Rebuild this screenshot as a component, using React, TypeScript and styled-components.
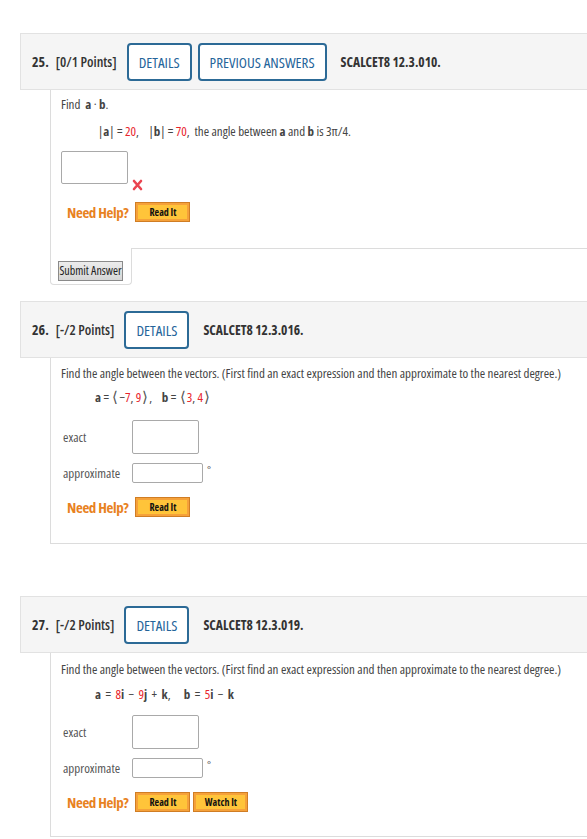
import React from "react";
import styled, { createGlobalStyle } from "styled-components";

const Global = createGlobalStyle`
  html, body { margin: 0; padding: 0; background: #ffffff; }
  body {
    font-family: "Open Sans", "Liberation Sans", sans-serif;
    font-stretch: 75%;
    font-weight: 400;
    color: #444;
  }
  button { font-family: inherit; font-stretch: inherit; }
`;

const Page = styled.div`
  padding: 33px 0 0 20px;
  display: flex;
  flex-direction: column;
`;

const Question = styled.section<{ $gap: number }>`
  margin-top: ${(p) => p.$gap}px;
  display: flex;
  flex-direction: column;
`;

const Header = styled.div`
  height: 55px;
  display: flex;
  align-items: center;
  background: #f5f5f5;
  border: 1px solid #e2e2e2;
  border-right: none;
  padding-left: 11px;
  color: #333;
  white-space: nowrap;
`;

const QNum = styled.span`
  font-size: 14px;
  font-weight: bold;
  margin-right: 7px;
`;

const Points = styled.span`
  font-size: 14px;
  font-weight: 600;
  margin-right: 10px;
`;

const OutlineButton = styled.button`
  height: 38px;
  padding: 0 10px;
  margin-right: 6px;
  border: 2px solid #2c6a96;
  border-radius: 4px;
  background: #fff;
  color: #24649a;
  font-size: 15px;
  font-weight: 400;
  white-space: nowrap;
`;

const Code = styled.span`
  margin-left: 8px;
  font-size: 13.5px;
  font-weight: bold;
`;

const Body = styled.div<{ $closed?: boolean }>`
  margin-left: 30px;
  border-left: 1px solid #dcdcdc;
  border-bottom: ${(p) => (p.$closed ? "1px solid #dcdcdc" : "none")};
  padding: 7px 0 0 10px;
  display: flex;
  flex-direction: column;
  font-size: 13px;
`;

const Line = styled.div<{ $indent?: number; $mt?: number; $spread?: number }>`
  line-height: 15px;
  margin-left: ${(p) => p.$indent ?? 0}px;
  margin-top: ${(p) => p.$mt ?? 0}px;
  word-spacing: ${(p) => p.$spread ?? 0}px;
  white-space: nowrap;
`;

const Red = styled.span`
  color: #e8242c;
`;

const Bracket = styled.span`
  font-family: "DejaVu Sans", sans-serif;
  font-size: 15px;
  font-weight: 300;
  color: #555;
  margin: 0 1px;
`;

const AnswerRow = styled.div<{ $mt: number }>`
  display: flex;
  align-items: flex-end;
  margin-top: ${(p) => p.$mt}px;
`;

const TextBox = styled.div<{ $w: number; $h: number }>`
  width: ${(p) => p.$w}px;
  height: ${(p) => p.$h}px;
  box-sizing: border-box;
  border: 1px solid #a9a9a9;
  border-radius: 2px;
  background: #fff;
`;

const WrongMark = styled.svg`
  width: 11px;
  height: 12px;
  margin: 0 0 -7px 4px;
`;

const HelpRow = styled.div<{ $mt: number }>`
  display: flex;
  align-items: center;
  gap: 3px;
  margin-top: ${(p) => p.$mt}px;
  padding-left: 6px;
`;

const NeedHelp = styled.span`
  color: #e8821f;
  font-weight: bold;
  font-size: 15px;
  letter-spacing: -0.4px;
  margin-right: 4px;
`;

const ResourceButton = styled.span`
  display: inline-flex;
  align-items: center;
  justify-content: center;
  width: 55px;
  height: 20px;
  box-sizing: border-box;
  border: 1px solid #d07d24;
  box-shadow: inset 0 0 0 2px #f5a13a;
  background: #ffc43a;
  color: #111;
  font-size: 10px;
  font-weight: bold;
  white-space: nowrap;
`;

const Grid = styled.div<{ $mt: number }>`
  display: grid;
  grid-template-columns: 69px auto;
  row-gap: 9px;
  align-items: center;
  margin-top: ${(p) => p.$mt}px;
  padding-left: 2px;
`;

const FieldLabel = styled.span`
  font-size: 13px;
  color: #555;
`;

const FieldCell = styled.div`
  display: flex;
  align-items: flex-start;
`;

const Degree = styled.span`
  font-size: 11px;
  line-height: 11px;
  color: #444;
  margin: 1px 0 0 4px;
`;

const Spacer = styled.div<{ $h: number }>`
  height: ${(p) => p.$h}px;
`;

const FooterRow = styled.div`
  display: flex;
  margin-left: 30px;
`;

const SubmitBox = styled.div`
  width: 82px;
  height: 37px;
  box-sizing: border-box;
  border: 1px solid #dcdcdc;
  border-top: none;
  border-radius: 0 0 4px 4px;
  padding: 10px 0 0 7px;
`;

const SubmitButton = styled.button`
  width: 65px;
  height: 20px;
  padding: 0;
  border: 1px solid #8a8a8a;
  background: linear-gradient(#ececec, #d6d6d6);
  font-size: 12px;
  font-weight: 400;
  color: #222;
  white-space: nowrap;
  overflow: hidden;
`;

const FooterFill = styled.div`
  flex: 1;
  border-top: 1px solid #dcdcdc;
`;

function HelpLine({ mt, watch }: { mt: number; watch?: boolean }) {
  return (
    <HelpRow $mt={mt}>
      <NeedHelp>Need Help?</NeedHelp>
      <ResourceButton>Read It</ResourceButton>
      {watch && <ResourceButton>Watch It</ResourceButton>}
    </HelpRow>
  );
}

function QHeader({ num, points, prev, code }: { num: string; points: string; prev?: boolean; code: string }) {
  return (
    <Header>
      <QNum>{num}</QNum>
      <Points>{points}</Points>
      <OutlineButton>DETAILS</OutlineButton>
      {prev && <OutlineButton>PREVIOUS ANSWERS</OutlineButton>}
      <Code>{code}</Code>
    </Header>
  );
}

function AngleFields({ mt }: { mt: number }) {
  return (
    <Grid $mt={mt}>
      <FieldLabel>exact</FieldLabel>
      <FieldCell>
        <TextBox $w={67} $h={34} />
      </FieldCell>
      <FieldLabel>approximate</FieldLabel>
      <FieldCell>
        <TextBox $w={71} $h={20} />
        <Degree>°</Degree>
      </FieldCell>
    </Grid>
  );
}

export default function App() {
  return (
    <>
      <Global />
      <Page>
        <Question $gap={0}>
          <QHeader num="25." points="[0/1 Points]" prev code="SCALCET8 12.3.010." />
          <Body>
            <Line>
              Find&nbsp; <b>a</b> · <b>b</b>.
            </Line>
            <Line $indent={37} $mt={12}>
              |<b>a</b>| = <Red>20</Red>,&nbsp;&nbsp;&nbsp; |<b>b</b>| = <Red>70</Red>,&nbsp; the angle between <b>a</b> and{" "}
              <b>b</b> is 3π/4.
            </Line>
            <AnswerRow $mt={12}>
              <TextBox $w={67} $h={33} />
              <WrongMark viewBox="0 0 11 12">
                <path d="M2 2 L9 10 M9 2 L2 10" stroke="#ea4450" strokeWidth="2.6" strokeLinecap="round" />
              </WrongMark>
            </AnswerRow>
            <HelpLine mt={18} />
            <Spacer $h={26} />
          </Body>
          <FooterRow>
            <SubmitBox>
              <SubmitButton>Submit Answer</SubmitButton>
            </SubmitBox>
            <FooterFill />
          </FooterRow>
        </Question>

        <Question $gap={16}>
          <QHeader num="26." points="[-/2 Points]" code="SCALCET8 12.3.016." />
          <Body $closed>
            <Line $mt={1}>
              Find the angle between the vectors. (First find an exact expression and then approximate to the nearest degree.)
            </Line>
            <Line $indent={34} $mt={9}>
              <b>a</b> = <Bracket>⟨</Bracket>−<Red>7</Red>, <Red>9</Red>
              <Bracket>⟩</Bracket>,&nbsp;&nbsp;&nbsp; <b>b</b> = <Bracket>⟨</Bracket>
              <Red>3</Red>, <Red>4</Red>
              <Bracket>⟩</Bracket>
            </Line>
            <AngleFields mt={15} />
            <HelpLine mt={14} />
            <Spacer $h={26} />
          </Body>
        </Question>

        <Question $gap={52}>
          <QHeader num="27." points="[-/2 Points]" code="SCALCET8 12.3.019." />
          <Body $closed>
            <Line $mt={2}>
              Find the angle between the vectors. (First find an exact expression and then approximate to the nearest degree.)
            </Line>
            <Line $indent={34} $mt={10} $spread={2}>
              <b>a</b> = <Red>8</Red>
              <b>i</b> − <Red>9</Red>
              <b>j</b> + <b>k</b>,&nbsp;&nbsp; <b>b</b> = <Red>5</Red>
              <b>i</b> − <b>k</b>
            </Line>
            <AngleFields mt={13} />
            <HelpLine mt={14} watch />
            <Spacer $h={24} />
          </Body>
        </Question>
      </Page>
    </>
  );
}
